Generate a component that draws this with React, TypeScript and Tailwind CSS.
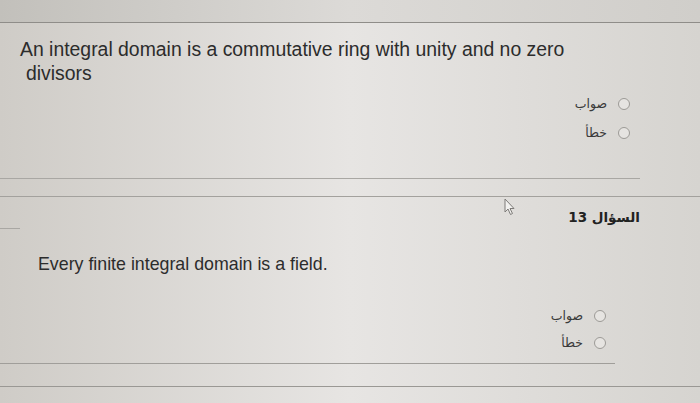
import React from "react";

const Radio = () => (
  <span className="inline-block w-[12px] h-[12px] rounded-full border border-[#9c9a96] bg-[#e6e4e1]" />
);

const Option = ({ label }: { label: string }) => (
  <div className="flex items-center justify-end gap-[11px]">
    <span
      className="text-[12.5px] leading-[20px] text-[#3a3a3a]"
      style={{ fontFamily: '"DejaVu Sans", "Noto Sans", sans-serif' }}
      dir="rtl"
    >
      {label}
    </span>
    <Radio />
  </div>
);

const Cursor = () => (
  <svg width="12" height="18" viewBox="0 0 12 18" className="absolute left-[504px] top-[198px]">
    <path
      d="M1 1 L1 14 L4 11 L6.5 16.5 L8.5 15.5 L6 10.5 L10 10.5 Z"
      fill="#f2f1ef"
      stroke="#7d7b78"
      strokeWidth="1"
      strokeLinejoin="round"
    />
  </svg>
);

export default function App() {
  return (
    <div
      className="relative w-[700px] h-[403px] overflow-hidden bg-gradient-to-r from-[#cfccc7] via-[#e7e5e3] to-[#d6d4d0] text-[#2c2c2c]"
      style={{ fontFamily: '"Liberation Sans", Arial, sans-serif' }}
    >
      <div className="h-[22px] bg-gradient-to-r from-[#c2c0bb] via-[#dcdad7] to-[#d0ceca]" />
      <div className="h-px bg-[#8f8d89]" />

      <div className="pt-[14px] pl-[20px] text-[19.4px] leading-[24px]">
        <div>An integral domain is a commutative ring with unity and no zero</div>
        <div className="pl-[6px]">divisors</div>
      </div>

      <div className="mt-[4px] pr-[70px] flex flex-col">
        <div className="h-[29px] flex items-center justify-end">
          <Option label="صواب" />
        </div>
        <div className="h-[29px] flex items-center justify-end">
          <Option label="خطأ" />
        </div>
      </div>

      <div className="mt-[31px] h-px w-[640px] bg-[#a9a7a3]" />
      <div className="mt-[17px] h-px bg-[#a3a19d]" />

      <div className="mt-[10px] flex items-start justify-between pr-[60px]">
        <div className="mt-[21px] h-px w-[20px] bg-[#a9a7a3]" />
        <div
          className="h-[20px] leading-[20px] text-[13.5px] font-bold text-[#222]"
          dir="rtl"
          style={{ fontFamily: '"DejaVu Sans", "Liberation Sans", sans-serif' }}
        >
          السؤال 13
        </div>
      </div>

      <div className="mt-[23px] pl-[38px] text-[17.8px] leading-[24px]">
        Every finite integral domain is a field.
      </div>

      <div className="mt-[26px] pr-[94px] flex flex-col">
        <div className="h-[27px] flex items-center justify-end">
          <Option label="صواب" />
        </div>
        <div className="h-[27px] flex items-center justify-end">
          <Option label="خطأ" />
        </div>
      </div>

      <div className="mt-[7px] h-px w-[615px] bg-[#a09e9a]" />
      <div className="mt-[22px] h-px bg-[#9a9894]" />

      <Cursor />
    </div>
  );
}
